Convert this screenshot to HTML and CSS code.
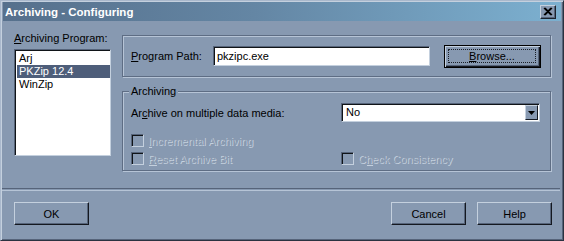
FILE: index.html
```html
<!DOCTYPE html>
<html>
<head>
<meta charset="utf-8">
<link rel="stylesheet" href="styles.css">
</head>
<body>
<div class="window">
  <div class="titlebar">
    <span class="title">Archiving - Configuring</span>
    <span class="close"><svg width="10" height="9" viewBox="0 0 10 9"><path d="M1 1 L8 8 M2 1 L9 8 M8 1 L1 8 M9 1 L2 8" stroke="#000" stroke-width="1.2" fill="none"/></svg></span>
  </div>
  <div class="content">
    <div class="leftcol">
      <div class="label"><u>A</u>rchiving Program:</div>
      <div class="listbox">
        <div class="item">Arj</div>
        <div class="item selected">PKZip 12.4</div>
        <div class="item">WinZip</div>
      </div>
    </div>
    <div class="rightcol">
      <div class="group pathgroup">
        <div class="pathlabel"><u>P</u>rogram Path:</div>
        <div class="edit">pkzipc.exe</div>
        <div class="btn default"><span class="focus"><u>B</u>rowse...</span></div>
      </div>
      <div class="group archgroup">
        <div class="legend">Archiving</div>
        <div class="row comborow">
          <div class="rowlabel">Ar<u>c</u>hive on multiple data media:</div>
          <div class="combo">
            <span class="comboval">No</span>
            <span class="dropbtn"><svg width="7" height="4" viewBox="0 0 7 4"><path d="M0 0 H7 L3.5 4 Z" fill="#000"/></svg></span>
          </div>
        </div>
        <div class="checks">
          <div class="check"><span class="box"></span><span class="dis"><u>I</u>ncremental Archiving</span></div>
          <div></div>
          <div class="check"><span class="box"></span><span class="dis"><u>R</u>eset Archive Bit</span></div>
          <div class="check"><span class="box"></span><span class="dis">C<u>h</u>eck Consistency</span></div>
        </div>
      </div>
    </div>
  </div>
  <div class="separator"></div>
  <div class="buttons">
    <div class="btn">OK</div>
    <div class="spacer"></div>
    <div class="btn">Cancel</div>
    <div class="btn">Help</div>
  </div>
</div>
</body>
</html>
```
FILE: styles.css
```css
html, body {
  margin: 0;
  padding: 0;
  background: #8799b1;
}
body {
  font-family: "Liberation Sans", Arial, sans-serif;
  font-size: 11px;
  color: #000;
}
u { text-decoration: underline; text-underline-offset: 1px; }
.window {
  width: 564px;
  height: 241px;
  box-sizing: border-box;
  background: #8799b1;
  border-top: 1px solid #a9b8cc;
  border-left: 1px solid #a9b8cc;
  border-right: 1px solid #2a3240;
  border-bottom: 1px solid #2a3240;
  box-shadow: inset 1px 1px #c4d0de, inset -1px -1px #56647a;
  padding: 1px;
  display: flex;
  flex-direction: column;
}
.titlebar {
  height: 19px;
  margin: 0 1px 0 1px;
  background: linear-gradient(to right, #56708c 0%, #6486a4 45%, #7cb0d0 100%);
  display: flex;
  align-items: center;
  justify-content: space-between;
  padding: 0 5px 0 2px;
}
.title {
  color: #fff;
  font-weight: bold;
  font-size: 11.5px;
}
.close {
  width: 16px;
  height: 14px;
  box-sizing: border-box;
  background: #8799b1;
  border-top: 1px solid #c4d0de;
  border-left: 1px solid #c4d0de;
  border-right: 1px solid #1c222c;
  border-bottom: 1px solid #1c222c;
  box-shadow: inset -1px -1px #56647a;
  display: flex;
  align-items: center;
  justify-content: center;
  padding-bottom: 1px;
}
.content {
  display: flex;
  margin-top: 11px;
  padding-left: 12px;
}
.leftcol {
  width: 97px;
  display: flex;
  flex-direction: column;
}
.label {
  line-height: 13px;
  height: 13px;
  margin-bottom: 4px;
}
.listbox {
  height: 107px;
  box-sizing: border-box;
  background: #fff;
  border-top: 1px solid #56647a;
  border-left: 1px solid #56647a;
  border-right: 1px solid #c4d0de;
  border-bottom: 1px solid #c4d0de;
  box-shadow: inset 1px 1px #101418;
  padding: 2px 0 0 2px;
}
.item {
  height: 13px;
  line-height: 13px;
  padding-left: 2px;
}
.item.selected {
  background: #4e5e7a;
  color: #fff;
}
.rightcol {
  margin-left: 11px;
  width: 429px;
  padding-top: 3px;
  display: flex;
  flex-direction: column;
}
.group {
  box-sizing: border-box;
  border: 1px solid #5e6d84;
  box-shadow: inset 1px 1px #b6c4d6, 1px 1px #b6c4d6;
}
.pathgroup {
  height: 42px;
  display: flex;
  align-items: center;
  padding: 0 9px 0 8px;
}
.pathlabel {
  width: 82px;
}
.edit {
  width: 217px;
  height: 20px;
  box-sizing: border-box;
  background: #fff;
  border-top: 1px solid #56647a;
  border-left: 1px solid #56647a;
  border-right: 1px solid #c4d0de;
  border-bottom: 1px solid #c4d0de;
  box-shadow: inset 1px 1px #101418;
  padding: 2px 0 0 3px;
  line-height: 14px;
  margin-right: 14px;
}
.btn {
  width: 75px;
  height: 23px;
  box-sizing: border-box;
  background: #8799b1;
  border-top: 1px solid #c4d0de;
  border-left: 1px solid #c4d0de;
  border-right: 1px solid #141820;
  border-bottom: 1px solid #141820;
  box-shadow: inset -1px -1px #56647a;
  display: flex;
  align-items: center;
  justify-content: center;
}
.btn.default {
  width: 97px;
  height: 23px;
  border: 1px solid #000;
  box-shadow: inset 1px 1px #c4d0de, inset -1px -1px #141820, inset -2px -2px #56647a;
  padding: 3px 4px 4px 3px;
}
.focus {
  flex: 1;
  align-self: stretch;
  border: 1px dotted #1a1f28;
  display: flex;
  align-items: center;
  justify-content: center;
}
.archgroup {
  margin-top: 14px;
  height: 80px;
  padding: 0 10px 0 8px;
  display: flex;
  flex-direction: column;
}
.legend {
  margin-top: -7px;
  margin-left: -2px;
  padding: 0 2px;
  align-self: flex-start;
  background: #8799b1;
  line-height: 13px;
}
.comborow {
  display: flex;
  align-items: center;
  margin-top: 5px;
  height: 19px;
}
.rowlabel {
  width: 210px;
}
.combo {
  width: 199px;
  height: 19px;
  box-sizing: border-box;
  background: #fff;
  border-top: 1px solid #56647a;
  border-left: 1px solid #56647a;
  border-right: 1px solid #c4d0de;
  border-bottom: 1px solid #c4d0de;
  box-shadow: inset 1px 1px #101418;
  display: flex;
  align-items: stretch;
  padding: 1px 1px 1px 1px;
}
.comboval {
  flex: 1;
  padding-left: 3px;
  line-height: 15px;
}
.dropbtn {
  width: 13px;
  box-sizing: border-box;
  background: #8799b1;
  border-top: 1px solid #c4d0de;
  border-left: 1px solid #c4d0de;
  border-right: 1px solid #141820;
  border-bottom: 1px solid #141820;
  display: flex;
  align-items: center;
  justify-content: center;
}
.checks {
  display: grid;
  grid-template-columns: 210px 1fr;
  row-gap: 5px;
  margin-top: 12px;
}
.check {
  display: flex;
  align-items: center;
  height: 13px;
}
.box {
  width: 13px;
  height: 13px;
  box-sizing: border-box;
  border-top: 1px solid #56647a;
  border-left: 1px solid #56647a;
  border-right: 1px solid #c4d0de;
  border-bottom: 1px solid #c4d0de;
  box-shadow: inset 1px 1px #101418;
  margin-right: 4px;
}
.dis {
  color: #8a9ab0;
  text-shadow: 1px 1px #c4d0de;
}
.separator {
  margin-top: 17px;
  height: 1px;
  border-top: 1px solid #56647a;
  border-bottom: 1px solid #b6c4d6;
  margin-left: 0;
  margin-right: 2px;
}
.buttons {
  display: flex;
  gap: 11px;
  margin-top: 11px;
  padding-left: 12px;
}
.spacer {
  flex: 1;
}
.buttons .btn:last-child {
  margin-right: 10px;
}
```
